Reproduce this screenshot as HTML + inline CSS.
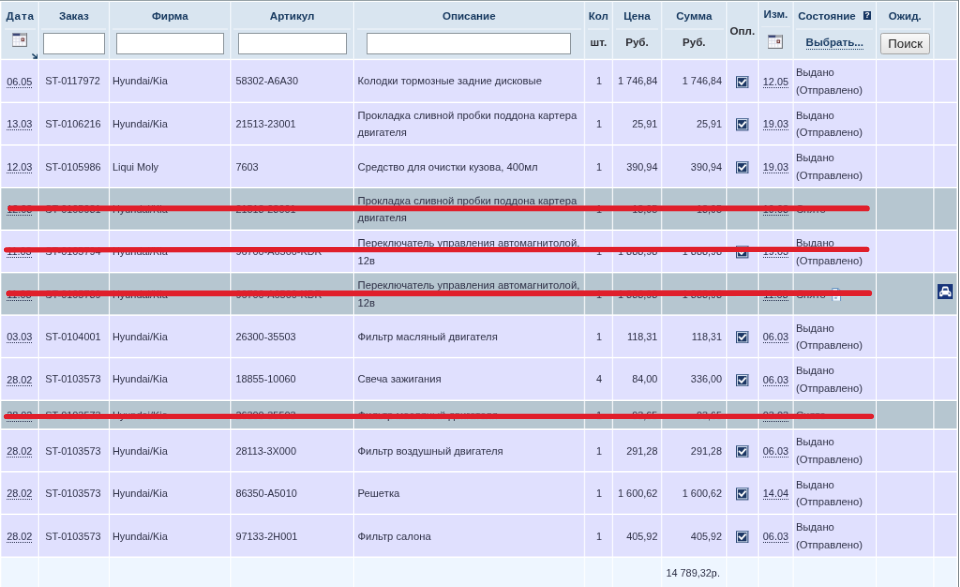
<!DOCTYPE html>
<html lang="ru"><head><meta charset="utf-8"><title>Заказы</title>
<style>
html,body{margin:0;padding:0;background:#fff;}
body{width:960px;height:587px;overflow:hidden;position:relative;font-family:"Liberation Sans",sans-serif;}
#grid,#marks{position:absolute;left:0;top:0;display:block;}
#wrap{position:absolute;left:0;top:0;width:1024px;height:627px;transform:scale(0.9375);transform-origin:0 0;overflow:hidden;will-change:transform;}
.r{position:absolute;left:1.39px;display:flex;flex-direction:row;}
.c{box-sizing:border-box;height:100%;display:flex;align-items:center;font-size:10.9px;color:#2e3046;white-space:nowrap;overflow:hidden;line-height:18.5px;}
.body .c>*,.foot .c>*{position:relative;top:0.4px;}
.body .c>.d{top:0.8px;}
.body .c>.chk{top:1px;}
.head .c{display:block;position:relative;}
.c0{padding-left:5.8px;}
.c1{padding-left:7.2px;}
.c2{padding-left:3.4px;}
.c3{padding-left:5.4px;}
.c4{padding-left:4.4px;font-size:11.25px;}
.c10{padding-left:3.0px;font-size:11.25px;}
.c5{justify-content:center;padding-left:1.4px;}
.c6{justify-content:flex-end;padding-right:4.2px;}
.c7{justify-content:flex-end;padding-right:4.8px;}
.c8{justify-content:center;}
.c9{justify-content:center;}
.c12{justify-content:center;}
.d{border-bottom:1.4px dotted #2b3350;line-height:12px;display:inline-block;color:#272b48;}
.head .t{position:absolute;left:0;right:0;top:7.4px;text-align:center;font-weight:bold;font-size:11.6px;line-height:16px;color:#183a60;}
.head .hr{position:absolute;left:3.4px;right:3.4px;top:27.9px;height:1.6px;background:#e7eef6;}
.head .s{position:absolute;left:0;right:0;top:34.2px;height:22px;text-align:center;font-weight:bold;font-size:11.6px;line-height:22px;color:#2c2c32;}
.head .s.tx{top:32.4px;}
.head input{box-sizing:border-box;height:22.2px;border:1px solid #8b949b;background:#fff;margin:0;padding:0;display:inline-block;vertical-align:top;position:relative;top:-0.9px;}
.head .cal,.head .arr{position:absolute;}
.help{display:inline-block;width:8.6px;height:8.6px;background:#163562;color:#fff;font-size:8.5px;line-height:9px;text-align:center;font-weight:bold;margin-left:8px;vertical-align:2px;}
.sel{color:#1d3f66;border-bottom:1.5px dotted #1d3f66;display:inline-block;line-height:14px;}
button{font-family:"Liberation Sans",sans-serif;font-size:13.33px;color:#222;box-sizing:border-box;width:52.5px;height:22.2px;padding:0;margin:0;border:1px solid #a3a3a3;border-radius:2.5px;background:linear-gradient(#f9f9f9,#e4e4e4);position:relative;top:-0.8px;left:0.4px;vertical-align:top;line-height:19px;}
svg{display:block;}
.c10 .doc{display:inline-block;vertical-align:middle;margin-left:6.6px;position:relative;top:-0.6px;}
.body .c12 .car{top:-2.4px;left:0.4px;}
</style></head><body>
<svg id="grid" width="960" height="587" viewBox="0 0 960 587"><rect x="0" y="0" width="960" height="587" fill="#fff"/><rect x="1.3" y="1.9" width="955.3" height="57.55" fill="#d9e5f0"/><rect x="1.3" y="59.45" width="955.3" height="42.95" fill="#e0e0fe"/><rect x="1.3" y="102.4" width="955.3" height="42.6" fill="#e0e0fe"/><rect x="1.3" y="145.0" width="955.3" height="42.6" fill="#e0e0fe"/><rect x="1.3" y="187.6" width="955.3" height="42.6" fill="#b6c6d0"/><rect x="1.3" y="230.2" width="955.3" height="42.4" fill="#e0e0fe"/><rect x="1.3" y="272.6" width="955.3" height="42.5" fill="#b6c6d0"/><rect x="1.3" y="315.1" width="955.3" height="42.5" fill="#e0e0fe"/><rect x="1.3" y="357.6" width="955.3" height="42.7" fill="#e0e0fe"/><rect x="1.3" y="400.3" width="955.3" height="28.9" fill="#b6c6d0"/><rect x="1.3" y="429.2" width="955.3" height="42.6" fill="#e0e0fe"/><rect x="1.3" y="471.8" width="955.3" height="42.5" fill="#e0e0fe"/><rect x="1.3" y="514.3" width="955.3" height="42.9" fill="#e0e0fe"/><rect x="1.3" y="557.2" width="955.3" height="30.8" fill="#eef6ff"/><rect x="0" y="58.75" width="960" height="1.4" fill="#fff"/><rect x="0" y="101.7" width="960" height="1.4" fill="#fff"/><rect x="0" y="144.3" width="960" height="1.4" fill="#fff"/><rect x="0" y="186.9" width="960" height="1.4" fill="#fff"/><rect x="0" y="229.5" width="960" height="1.4" fill="#fff"/><rect x="0" y="271.9" width="960" height="1.4" fill="#fff"/><rect x="0" y="314.4" width="960" height="1.4" fill="#fff"/><rect x="0" y="356.9" width="960" height="1.4" fill="#fff"/><rect x="0" y="399.6" width="960" height="1.4" fill="#fff"/><rect x="0" y="428.5" width="960" height="1.4" fill="#fff"/><rect x="0" y="471.1" width="960" height="1.4" fill="#fff"/><rect x="0" y="513.6" width="960" height="1.4" fill="#fff"/><rect x="0" y="556.5" width="960" height="1.4" fill="#fff"/><rect x="37.8" y="1.9" width="1.4" height="57.55" fill="#eef4fa"/><rect x="37.8" y="59.45" width="1.4" height="528.55" fill="#fff" fill-opacity="0.72"/><rect x="108.65" y="1.9" width="1.4" height="57.55" fill="#eef4fa"/><rect x="108.65" y="59.45" width="1.4" height="528.55" fill="#fff" fill-opacity="0.72"/><rect x="229.95" y="1.9" width="1.4" height="57.55" fill="#eef4fa"/><rect x="229.95" y="59.45" width="1.4" height="528.55" fill="#fff" fill-opacity="0.72"/><rect x="352.95" y="1.9" width="1.4" height="57.55" fill="#eef4fa"/><rect x="352.95" y="59.45" width="1.4" height="528.55" fill="#fff" fill-opacity="0.72"/><rect x="583.8" y="1.9" width="1.4" height="57.55" fill="#eef4fa"/><rect x="583.8" y="59.45" width="1.4" height="528.55" fill="#fff" fill-opacity="0.72"/><rect x="611.8" y="1.9" width="1.4" height="57.55" fill="#eef4fa"/><rect x="611.8" y="59.45" width="1.4" height="528.55" fill="#fff" fill-opacity="0.72"/><rect x="660.9" y="1.9" width="1.4" height="57.55" fill="#eef4fa"/><rect x="660.9" y="59.45" width="1.4" height="528.55" fill="#fff" fill-opacity="0.72"/><rect x="725.9" y="1.9" width="1.4" height="57.55" fill="#eef4fa"/><rect x="725.9" y="59.45" width="1.4" height="528.55" fill="#fff" fill-opacity="0.72"/><rect x="757.7" y="1.9" width="1.4" height="57.55" fill="#eef4fa"/><rect x="757.7" y="59.45" width="1.4" height="528.55" fill="#fff" fill-opacity="0.72"/><rect x="792.5" y="1.9" width="1.4" height="57.55" fill="#eef4fa"/><rect x="792.5" y="59.45" width="1.4" height="528.55" fill="#fff" fill-opacity="0.72"/><rect x="875.6" y="1.9" width="1.4" height="57.55" fill="#eef4fa"/><rect x="875.6" y="59.45" width="1.4" height="528.55" fill="#fff" fill-opacity="0.72"/><rect x="933.1" y="1.9" width="1.4" height="57.55" fill="#eef4fa"/><rect x="933.1" y="59.45" width="1.4" height="528.55" fill="#fff" fill-opacity="0.72"/><rect x="0" y="0" width="958.9" height="0.75" fill="#76848b"/><rect x="958.0" y="0" width="0.85" height="587" fill="#6c767d"/></svg>
<div id="wrap">
<div class="r head" style="top:2.03px;height:61.39px"><div class="c c0 " style="width:39.68px;"><div class="t"><span style="letter-spacing:0.9px;margin-right:-0.9px">Дата</span></div><div class="hr"></div><div class="s"></div><svg class="cal" style="left:11.6px;top:33.4px" viewBox="0 0 16 15" width="16" height="15"><rect x="0" y="0" width="16" height="15" fill="#8d8f96"/><rect x="0.6" y="0.6" width="14.2" height="13.2" fill="#fbfbfd"/><rect x="0.6" y="0.6" width="8" height="2.6" fill="#3b4778"/><rect x="8.6" y="0.6" width="6.2" height="2.6" fill="#a4a8ad"/><path d="M0.6 6.4H14.8M0.6 9.6H14.8M4 3.2V13.8M7.4 3.2V13.8M10.8 3.2V13.8" stroke="#d5d9e6" stroke-width="0.8" fill="none"/><rect x="10" y="6" width="2.6" height="2.6" fill="#efe0dc" stroke="#6e3434" stroke-width="1"/><path d="M15.5 0.5V14.5H0.5" stroke="#74787e" stroke-width="1" fill="none"/></svg><svg class="arr" style="left:32.4px;top:55px" viewBox="0 0 7 6" width="6.6" height="5.6"><path d="M0.4 0.6L5.2 4.6M6.2 0.8V5.4H1.4" stroke="#123a5e" stroke-width="1.6" fill="none"/></svg></div><div class="c c1 " style="width:75.57px;"><div class="t">Заказ</div><div class="hr"></div><div class="s"><input type="text" style="width:66px"></div></div><div class="c c2 " style="width:129.39px;"><div class="t">Фирма</div><div class="hr"></div><div class="s"><input type="text" style="width:114.6px"></div></div><div class="c c3 " style="width:131.2px;"><div class="t">Артикул</div><div class="hr"></div><div class="s"><input type="text" style="width:116px"></div></div><div class="c c4 " style="width:246.24px;"><div class="t">Описание</div><div class="hr"></div><div class="s"><input type="text" style="width:218.4px"></div></div><div class="c c5 " style="width:29.87px;"><div class="t">Кол</div><div class="hr"></div><div class="s tx">шт.</div></div><div class="c c6 " style="width:52.37px;"><div class="t">Цена</div><div class="hr"></div><div class="s tx">Руб.</div></div><div class="c c7 " style="width:69.33px;"><div class="t">Сумма</div><div class="hr"></div><div class="s tx">Руб.</div></div><div class="c c8 " style="width:33.92px;"><div class="s" style="top:19.8px">Опл.</div></div><div class="c c9 " style="width:37.12px;"><div class="t" style="top:5.1px">Изм.</div><div class="hr" style="top:25.7px"></div><svg class="cal" style="left:10.2px;top:35px" viewBox="0 0 16 15" width="16" height="15"><rect x="0" y="0" width="16" height="15" fill="#8d8f96"/><rect x="0.6" y="0.6" width="14.2" height="13.2" fill="#fbfbfd"/><rect x="0.6" y="0.6" width="8" height="2.6" fill="#3b4778"/><rect x="8.6" y="0.6" width="6.2" height="2.6" fill="#a4a8ad"/><path d="M0.6 6.4H14.8M0.6 9.6H14.8M4 3.2V13.8M7.4 3.2V13.8M10.8 3.2V13.8" stroke="#d5d9e6" stroke-width="0.8" fill="none"/><rect x="10" y="6" width="2.6" height="2.6" fill="#efe0dc" stroke="#6e3434" stroke-width="1"/><path d="M15.5 0.5V14.5H0.5" stroke="#74787e" stroke-width="1" fill="none"/></svg></div><div class="c c10 " style="width:88.64px;"><div class="t">Состояние<span class="help">?</span></div><div class="hr"></div><div class="s tx"><span class="sel">Выбрать...</span></div></div><div class="c c11 " style="width:61.33px;"><div class="t">Ожид.</div><div class="hr"></div><div class="s"><button type="button">Поиск</button></div></div><div class="c c12 " style="width:24.32px;"></div></div>
<div class="r body" style="top:63.41px;height:45.81px"><div class="c c0 " style="width:39.68px;"><span class="d">06.05</span></div><div class="c c1 " style="width:75.57px;"><span>ST-0117972</span></div><div class="c c2 " style="width:129.39px;"><span>Hyundai/Kia</span></div><div class="c c3 " style="width:131.2px;"><span>58302-A6A30</span></div><div class="c c4 " style="width:246.24px;"><div>Колодки тормозные задние дисковые</div></div><div class="c c5 " style="width:29.87px;"><span>1</span></div><div class="c c6 " style="width:52.37px;"><span>1 746,84</span></div><div class="c c7 " style="width:69.33px;"><span>1 746,84</span></div><div class="c c8 " style="width:33.92px;"><svg class="chk" viewBox="0 0 13 13" width="13.4" height="13.4"><rect x="0" y="0" width="13" height="13" fill="#2b4674"/><rect x="0" y="0" width="13" height="1" fill="#56709a"/><rect x="1" y="1" width="11" height="11" fill="#d6e2f2"/><rect x="2" y="2" width="9" height="9" fill="#1c3764"/><path d="M3.6 6.4L5.7 8.6L9.6 4.2" stroke="#fff" stroke-width="1.9" fill="none" stroke-linecap="square"/></svg></div><div class="c c9 " style="width:37.12px;"><span class="d">12.05</span></div><div class="c c10 " style="width:88.64px;"><div>Выдано<br>(Отправлено)</div></div><div class="c c11 " style="width:61.33px;"></div><div class="c c12 " style="width:24.32px;"></div></div>
<div class="r body" style="top:109.23px;height:45.44px"><div class="c c0 " style="width:39.68px;"><span class="d">13.03</span></div><div class="c c1 " style="width:75.57px;"><span>ST-0106216</span></div><div class="c c2 " style="width:129.39px;"><span>Hyundai/Kia</span></div><div class="c c3 " style="width:131.2px;"><span>21513-23001</span></div><div class="c c4 " style="width:246.24px;"><div>Прокладка сливной пробки поддона картера<br>двигателя</div></div><div class="c c5 " style="width:29.87px;"><span>1</span></div><div class="c c6 " style="width:52.37px;"><span>25,91</span></div><div class="c c7 " style="width:69.33px;"><span>25,91</span></div><div class="c c8 " style="width:33.92px;"><svg class="chk" viewBox="0 0 13 13" width="13.4" height="13.4"><rect x="0" y="0" width="13" height="13" fill="#2b4674"/><rect x="0" y="0" width="13" height="1" fill="#56709a"/><rect x="1" y="1" width="11" height="11" fill="#d6e2f2"/><rect x="2" y="2" width="9" height="9" fill="#1c3764"/><path d="M3.6 6.4L5.7 8.6L9.6 4.2" stroke="#fff" stroke-width="1.9" fill="none" stroke-linecap="square"/></svg></div><div class="c c9 " style="width:37.12px;"><span class="d">19.03</span></div><div class="c c10 " style="width:88.64px;"><div>Выдано<br>(Отправлено)</div></div><div class="c c11 " style="width:61.33px;"></div><div class="c c12 " style="width:24.32px;"></div></div>
<div class="r body" style="top:154.67px;height:45.44px"><div class="c c0 " style="width:39.68px;"><span class="d">12.03</span></div><div class="c c1 " style="width:75.57px;"><span>ST-0105986</span></div><div class="c c2 " style="width:129.39px;"><span>Liqui Moly</span></div><div class="c c3 " style="width:131.2px;"><span>7603</span></div><div class="c c4 " style="width:246.24px;"><div>Средство для очистки кузова, 400мл</div></div><div class="c c5 " style="width:29.87px;"><span>1</span></div><div class="c c6 " style="width:52.37px;"><span>390,94</span></div><div class="c c7 " style="width:69.33px;"><span>390,94</span></div><div class="c c8 " style="width:33.92px;"><svg class="chk" viewBox="0 0 13 13" width="13.4" height="13.4"><rect x="0" y="0" width="13" height="13" fill="#2b4674"/><rect x="0" y="0" width="13" height="1" fill="#56709a"/><rect x="1" y="1" width="11" height="11" fill="#d6e2f2"/><rect x="2" y="2" width="9" height="9" fill="#1c3764"/><path d="M3.6 6.4L5.7 8.6L9.6 4.2" stroke="#fff" stroke-width="1.9" fill="none" stroke-linecap="square"/></svg></div><div class="c c9 " style="width:37.12px;"><span class="d">19.03</span></div><div class="c c10 " style="width:88.64px;"><div>Выдано<br>(Отправлено)</div></div><div class="c c11 " style="width:61.33px;"></div><div class="c c12 " style="width:24.32px;"></div></div>
<div class="r body off" style="top:200.11px;height:45.44px"><div class="c c0 " style="width:39.68px;"><span class="d">12.03</span></div><div class="c c1 " style="width:75.57px;"><span>ST-0105981</span></div><div class="c c2 " style="width:129.39px;"><span>Hyundai/Kia</span></div><div class="c c3 " style="width:131.2px;"><span>21513-23001</span></div><div class="c c4 " style="width:246.24px;"><div>Прокладка сливной пробки поддона картера<br>двигателя</div></div><div class="c c5 " style="width:29.87px;"><span>1</span></div><div class="c c6 " style="width:52.37px;"><span>18,95</span></div><div class="c c7 " style="width:69.33px;"><span>18,95</span></div><div class="c c8 " style="width:33.92px;"></div><div class="c c9 " style="width:37.12px;"><span class="d">19.03</span></div><div class="c c10 " style="width:88.64px;"><div>Снято</div></div><div class="c c11 " style="width:61.33px;"></div><div class="c c12 " style="width:24.32px;"></div></div>
<div class="r body" style="top:245.55px;height:45.23px"><div class="c c0 " style="width:39.68px;"><span class="d">11.03</span></div><div class="c c1 " style="width:75.57px;"><span>ST-0105794</span></div><div class="c c2 " style="width:129.39px;"><span>Hyundai/Kia</span></div><div class="c c3 " style="width:131.2px;"><span>96700-A6500-KDR</span></div><div class="c c4 " style="width:246.24px;"><div>Переключатель управления автомагнитолой,<br>12в</div></div><div class="c c5 " style="width:29.87px;"><span>1</span></div><div class="c c6 " style="width:52.37px;"><span>1 888,98</span></div><div class="c c7 " style="width:69.33px;"><span>1 888,98</span></div><div class="c c8 " style="width:33.92px;"><svg class="chk" viewBox="0 0 13 13" width="13.4" height="13.4"><rect x="0" y="0" width="13" height="13" fill="#2b4674"/><rect x="0" y="0" width="13" height="1" fill="#56709a"/><rect x="1" y="1" width="11" height="11" fill="#d6e2f2"/><rect x="2" y="2" width="9" height="9" fill="#1c3764"/><path d="M3.6 6.4L5.7 8.6L9.6 4.2" stroke="#fff" stroke-width="1.9" fill="none" stroke-linecap="square"/></svg></div><div class="c c9 " style="width:37.12px;"><span class="d">19.03</span></div><div class="c c10 " style="width:88.64px;"><div>Выдано<br>(Отправлено)</div></div><div class="c c11 " style="width:61.33px;"></div><div class="c c12 " style="width:24.32px;"></div></div>
<div class="r body off" style="top:290.77px;height:45.33px"><div class="c c0 " style="width:39.68px;"><span class="d">11.03</span></div><div class="c c1 " style="width:75.57px;"><span>ST-0105789</span></div><div class="c c2 " style="width:129.39px;"><span>Hyundai/Kia</span></div><div class="c c3 " style="width:131.2px;"><span>96700-A6500-KDR</span></div><div class="c c4 " style="width:246.24px;"><div>Переключатель управления автомагнитолой,<br>12в</div></div><div class="c c5 " style="width:29.87px;"><span>1</span></div><div class="c c6 " style="width:52.37px;"><span>1 888,98</span></div><div class="c c7 " style="width:69.33px;"><span>1 888,98</span></div><div class="c c8 " style="width:33.92px;"></div><div class="c c9 " style="width:37.12px;"><span class="d">11.03</span></div><div class="c c10 " style="width:88.64px;"><div>Снято<svg class="doc" viewBox="0 0 10 15" width="10.4" height="14.8"><path d="M0.6 0.6H6.6L9.4 3.4V14.4H0.6Z" fill="#f3f8fd" stroke="#6f98c4" stroke-width="1.1"/><path d="M6.4 0.8V3.6H9.2" fill="none" stroke="#6f98c4" stroke-width="1"/><path d="M3 6.2H6.6M3 8.6H6.6M3 11H5.6" stroke="#5b84b2" stroke-width="1.1"/></svg></div></div><div class="c c11 " style="width:61.33px;"></div><div class="c c12 " style="width:24.32px;"><svg class="car" viewBox="0 0 16 16" width="16.4" height="16.4"><rect width="16" height="16" fill="#17347a"/><path d="M4.3 7L5 3.7Q5.3 2.5 6.5 2.5H9.7Q10.9 2.5 11.2 3.7L11.9 7Q14.1 7.4 14.1 9.2V12.3Q14.1 13 13.4 13H11.6Q10.9 13 10.9 12.3V11.3H5.3V12.3Q5.3 13 4.6 13H2.8Q2.1 13 2.1 12.3V9.2Q2.1 7.4 4.3 7Z" fill="#fff"/><path d="M5.7 6.5L6.3 4.3H9.9L10.5 6.5Z" fill="#1f3f86"/><circle cx="4.1" cy="9.6" r="0.9" fill="#17347a"/><circle cx="12.1" cy="9.6" r="0.9" fill="#17347a"/></svg></div></div>
<div class="r body" style="top:336.11px;height:45.33px"><div class="c c0 " style="width:39.68px;"><span class="d">03.03</span></div><div class="c c1 " style="width:75.57px;"><span>ST-0104001</span></div><div class="c c2 " style="width:129.39px;"><span>Hyundai/Kia</span></div><div class="c c3 " style="width:131.2px;"><span>26300-35503</span></div><div class="c c4 " style="width:246.24px;"><div>Фильтр масляный двигателя</div></div><div class="c c5 " style="width:29.87px;"><span>1</span></div><div class="c c6 " style="width:52.37px;"><span>118,31</span></div><div class="c c7 " style="width:69.33px;"><span>118,31</span></div><div class="c c8 " style="width:33.92px;"><svg class="chk" viewBox="0 0 13 13" width="13.4" height="13.4"><rect x="0" y="0" width="13" height="13" fill="#2b4674"/><rect x="0" y="0" width="13" height="1" fill="#56709a"/><rect x="1" y="1" width="11" height="11" fill="#d6e2f2"/><rect x="2" y="2" width="9" height="9" fill="#1c3764"/><path d="M3.6 6.4L5.7 8.6L9.6 4.2" stroke="#fff" stroke-width="1.9" fill="none" stroke-linecap="square"/></svg></div><div class="c c9 " style="width:37.12px;"><span class="d">06.03</span></div><div class="c c10 " style="width:88.64px;"><div>Выдано<br>(Отправлено)</div></div><div class="c c11 " style="width:61.33px;"></div><div class="c c12 " style="width:24.32px;"></div></div>
<div class="r body" style="top:381.44px;height:45.55px"><div class="c c0 " style="width:39.68px;"><span class="d">28.02</span></div><div class="c c1 " style="width:75.57px;"><span>ST-0103573</span></div><div class="c c2 " style="width:129.39px;"><span>Hyundai/Kia</span></div><div class="c c3 " style="width:131.2px;"><span>18855-10060</span></div><div class="c c4 " style="width:246.24px;"><div>Свеча зажигания</div></div><div class="c c5 " style="width:29.87px;"><span>4</span></div><div class="c c6 " style="width:52.37px;"><span>84,00</span></div><div class="c c7 " style="width:69.33px;"><span>336,00</span></div><div class="c c8 " style="width:33.92px;"><svg class="chk" viewBox="0 0 13 13" width="13.4" height="13.4"><rect x="0" y="0" width="13" height="13" fill="#2b4674"/><rect x="0" y="0" width="13" height="1" fill="#56709a"/><rect x="1" y="1" width="11" height="11" fill="#d6e2f2"/><rect x="2" y="2" width="9" height="9" fill="#1c3764"/><path d="M3.6 6.4L5.7 8.6L9.6 4.2" stroke="#fff" stroke-width="1.9" fill="none" stroke-linecap="square"/></svg></div><div class="c c9 " style="width:37.12px;"><span class="d">06.03</span></div><div class="c c10 " style="width:88.64px;"><div>Выдано<br>(Отправлено)</div></div><div class="c c11 " style="width:61.33px;"></div><div class="c c12 " style="width:24.32px;"></div></div>
<div class="r body off" style="top:426.99px;height:30.83px"><div class="c c0 " style="width:39.68px;"><span class="d">28.02</span></div><div class="c c1 " style="width:75.57px;"><span>ST-0103573</span></div><div class="c c2 " style="width:129.39px;"><span>Hyundai/Kia</span></div><div class="c c3 " style="width:131.2px;"><span>26300-35503</span></div><div class="c c4 " style="width:246.24px;"><div>Фильтр масляный двигателя</div></div><div class="c c5 " style="width:29.87px;"><span>1</span></div><div class="c c6 " style="width:52.37px;"><span>93,65</span></div><div class="c c7 " style="width:69.33px;"><span>93,65</span></div><div class="c c8 " style="width:33.92px;"></div><div class="c c9 " style="width:37.12px;"><span class="d">03.03</span></div><div class="c c10 " style="width:88.64px;"><div>Снято</div></div><div class="c c11 " style="width:61.33px;"></div><div class="c c12 " style="width:24.32px;"></div></div>
<div class="r body" style="top:457.81px;height:45.44px"><div class="c c0 " style="width:39.68px;"><span class="d">28.02</span></div><div class="c c1 " style="width:75.57px;"><span>ST-0103573</span></div><div class="c c2 " style="width:129.39px;"><span>Hyundai/Kia</span></div><div class="c c3 " style="width:131.2px;"><span>28113-3X000</span></div><div class="c c4 " style="width:246.24px;"><div>Фильтр воздушный двигателя</div></div><div class="c c5 " style="width:29.87px;"><span>1</span></div><div class="c c6 " style="width:52.37px;"><span>291,28</span></div><div class="c c7 " style="width:69.33px;"><span>291,28</span></div><div class="c c8 " style="width:33.92px;"><svg class="chk" viewBox="0 0 13 13" width="13.4" height="13.4"><rect x="0" y="0" width="13" height="13" fill="#2b4674"/><rect x="0" y="0" width="13" height="1" fill="#56709a"/><rect x="1" y="1" width="11" height="11" fill="#d6e2f2"/><rect x="2" y="2" width="9" height="9" fill="#1c3764"/><path d="M3.6 6.4L5.7 8.6L9.6 4.2" stroke="#fff" stroke-width="1.9" fill="none" stroke-linecap="square"/></svg></div><div class="c c9 " style="width:37.12px;"><span class="d">06.03</span></div><div class="c c10 " style="width:88.64px;"><div>Выдано<br>(Отправлено)</div></div><div class="c c11 " style="width:61.33px;"></div><div class="c c12 " style="width:24.32px;"></div></div>
<div class="r body" style="top:503.25px;height:45.33px"><div class="c c0 " style="width:39.68px;"><span class="d">28.02</span></div><div class="c c1 " style="width:75.57px;"><span>ST-0103573</span></div><div class="c c2 " style="width:129.39px;"><span>Hyundai/Kia</span></div><div class="c c3 " style="width:131.2px;"><span>86350-A5010</span></div><div class="c c4 " style="width:246.24px;"><div>Решетка</div></div><div class="c c5 " style="width:29.87px;"><span>1</span></div><div class="c c6 " style="width:52.37px;"><span>1 600,62</span></div><div class="c c7 " style="width:69.33px;"><span>1 600,62</span></div><div class="c c8 " style="width:33.92px;"><svg class="chk" viewBox="0 0 13 13" width="13.4" height="13.4"><rect x="0" y="0" width="13" height="13" fill="#2b4674"/><rect x="0" y="0" width="13" height="1" fill="#56709a"/><rect x="1" y="1" width="11" height="11" fill="#d6e2f2"/><rect x="2" y="2" width="9" height="9" fill="#1c3764"/><path d="M3.6 6.4L5.7 8.6L9.6 4.2" stroke="#fff" stroke-width="1.9" fill="none" stroke-linecap="square"/></svg></div><div class="c c9 " style="width:37.12px;"><span class="d">14.04</span></div><div class="c c10 " style="width:88.64px;"><div>Выдано<br>(Отправлено)</div></div><div class="c c11 " style="width:61.33px;"></div><div class="c c12 " style="width:24.32px;"></div></div>
<div class="r body" style="top:548.59px;height:45.76px"><div class="c c0 " style="width:39.68px;"><span class="d">28.02</span></div><div class="c c1 " style="width:75.57px;"><span>ST-0103573</span></div><div class="c c2 " style="width:129.39px;"><span>Hyundai/Kia</span></div><div class="c c3 " style="width:131.2px;"><span>97133-2H001</span></div><div class="c c4 " style="width:246.24px;"><div>Фильтр салона</div></div><div class="c c5 " style="width:29.87px;"><span>1</span></div><div class="c c6 " style="width:52.37px;"><span>405,92</span></div><div class="c c7 " style="width:69.33px;"><span>405,92</span></div><div class="c c8 " style="width:33.92px;"><svg class="chk" viewBox="0 0 13 13" width="13.4" height="13.4"><rect x="0" y="0" width="13" height="13" fill="#2b4674"/><rect x="0" y="0" width="13" height="1" fill="#56709a"/><rect x="1" y="1" width="11" height="11" fill="#d6e2f2"/><rect x="2" y="2" width="9" height="9" fill="#1c3764"/><path d="M3.6 6.4L5.7 8.6L9.6 4.2" stroke="#fff" stroke-width="1.9" fill="none" stroke-linecap="square"/></svg></div><div class="c c9 " style="width:37.12px;"><span class="d">06.03</span></div><div class="c c10 " style="width:88.64px;"><div>Выдано<br>(Отправлено)</div></div><div class="c c11 " style="width:61.33px;"></div><div class="c c12 " style="width:24.32px;"></div></div>
<div class="r foot" style="top:594.35px;height:32.21px"><div class="c c0 " style="width:39.68px;"></div><div class="c c1 " style="width:75.57px;"></div><div class="c c2 " style="width:129.39px;"></div><div class="c c3 " style="width:131.2px;"></div><div class="c c4 " style="width:246.24px;"></div><div class="c c5 " style="width:29.87px;"></div><div class="c c6 " style="width:52.37px;"></div><div class="c c7 " style="width:69.33px;justify-content:flex-start;padding-left:4.8px;overflow:visible;"><span>14 789,32р.</span></div><div class="c c8 " style="width:33.92px;"></div><div class="c c9 " style="width:37.12px;"></div><div class="c c10 " style="width:88.64px;"></div><div class="c c11 " style="width:61.33px;"></div><div class="c c12 " style="width:24.32px;"></div></div>
</div>
<svg id="marks" width="960" height="587" viewBox="0 0 960 587"><line x1="10.5" y1="208.4" x2="866.8" y2="208.4" stroke="#e01f2b" stroke-width="5.9" stroke-linecap="round"/><line x1="6.5" y1="249.8" x2="866.8" y2="249.4" stroke="#e01f2b" stroke-width="5.3" stroke-linecap="round"/><line x1="9.0" y1="293.4" x2="869.2" y2="293.2" stroke="#e01f2b" stroke-width="5.8" stroke-linecap="round"/><line x1="6.35" y1="416.5" x2="871.4" y2="416.3" stroke="#e01f2b" stroke-width="5.2" stroke-linecap="round"/></svg>
</body></html>
